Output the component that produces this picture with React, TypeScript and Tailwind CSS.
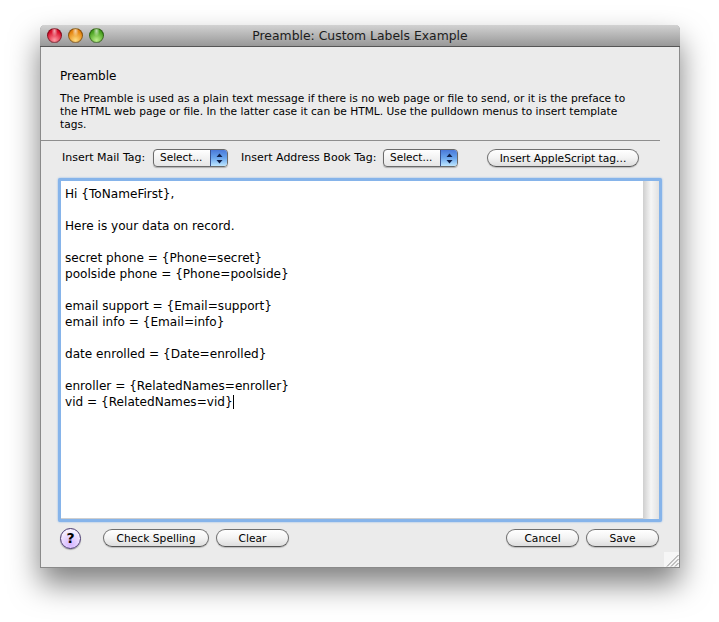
const font = { fontFamily: '"DejaVu Sans", sans-serif' };

function Light({ c }: { c: string }) {
  return <span className={`w-[15px] h-[15px] rounded-full border border-black/40 ${c}`} />;
}

function Capsule({ label, w }: { label: string; w: string }) {
  return (
    <button className={`${w} h-[18px] rounded-full border border-[#6f6f6f] border-b-[#555] bg-gradient-to-b from-white via-[#f3f3f3] to-[#dedede] text-[10.7px] leading-[15px] text-black shadow-[0_1px_1px_rgba(0,0,0,0.2)]`}>
      {label}
    </button>
  );
}

function Select({ mr }: { mr?: string }) {
  return (
    <div className={`flex h-[18px] w-[75px] rounded-[4px] border border-[#6a6a6a] overflow-hidden bg-gradient-to-b from-white to-[#e6e6e6] shadow-[0_1px_1px_rgba(0,0,0,0.25)] ${mr ?? ''}`}>
      <span className="flex-1 pl-[6px] text-[10.5px] leading-[15px] text-black">Select...</span>
      <span className="w-[17px] flex items-center justify-center bg-gradient-to-b from-[#4a78d8] via-[#6aa6ee] to-[#bfe6fd] border-l border-[#39528f]">
        <svg width="7" height="11" viewBox="0 0 7 11">
          <path d="M3.5 0.5 L6.5 4 H0.5 Z M3.5 10.5 L6.5 7 H0.5 Z" fill="#10204a" />
        </svg>
      </span>
    </div>
  );
}

const lines = [
  'Hi {ToNameFirst},',
  '',
  'Here is your data on record.',
  '',
  'secret phone = {Phone=secret}',
  'poolside phone = {Phone=poolside}',
  '',
  'email support = {Email=support}',
  'email info = {Email=info}',
  '',
  'date enrolled = {Date=enrolled}',
  '',
  'enroller = {RelatedNames=enroller}',
];

export default function App() {
  return (
    <div className="w-[719px] h-[622px] bg-white pt-[25px] pl-[40px] overflow-hidden" style={font}>
      <div className="relative w-[640px] h-[543px] rounded-t-[5px] bg-[#ebebeb] border-x border-b border-[#8a8a8a] shadow-[0_16px_30px_rgba(0,0,0,0.5)] flex flex-col">
        <div className="relative h-[22px] shrink-0 -mx-px rounded-t-[5px] bg-gradient-to-b from-[#d2d2d2] to-[#989898] border-b border-[#555] flex items-center pl-[7px] gap-[6px]">
          <Light c="bg-[radial-gradient(ellipse_at_50%_15%,rgba(255,255,255,0.65),transparent_35%),radial-gradient(circle_at_50%_85%,#ff9aa4,#d80c28_70%)]" />
          <Light c="bg-[radial-gradient(ellipse_at_50%_15%,rgba(255,255,255,0.65),transparent_35%),radial-gradient(circle_at_50%_85%,#ffdc80,#e4820c_70%)]" />
          <Light c="bg-[radial-gradient(ellipse_at_50%_15%,rgba(255,255,255,0.65),transparent_35%),radial-gradient(circle_at_50%_85%,#bcf08a,#47a01e_70%)]" />
          <span className="absolute inset-0 text-center text-[12.4px] leading-[22px] text-[#1c1c1c]">Preamble: Custom Labels Example</span>
        </div>

        <h1 className="mt-[21px] ml-[19px] text-[12px] leading-[16px] font-normal text-black">Preamble</h1>
        <p className="mt-[8px] ml-[19px] w-[572px] text-[10.65px] leading-[13px] text-black">
          The Preamble is used as a plain text message if there is no web page or file to send, or it is the preface to the HTML web page or file. In the latter case it can be HTML. Use the pulldown menus to insert template tags.
        </p>

        <div className="mt-[9px] w-[619px] h-px bg-[#8e8e8e]" />

        <div className="mt-[8px] flex items-center h-[18px] pl-[21px] text-[11px] text-black">
          <span className="w-[91px]">Insert Mail Tag:</span>
          <Select mr="mr-[13px]" />
          <span className="w-[142px]">Insert Address Book Tag:</span>
          <Select mr="mr-[29px]" />
          <Capsule label="Insert AppleScript tag..." w="w-[152px]" />
        </div>

        <div className="mt-[11px] ml-[17px] w-[604px] h-[344px] rounded-[2px] border-[3px] border-[#86b4ea] flex bg-white shadow-[0_0_2px_#7fb0e8,inset_0_-1px_0_#cfcfcf]">
          <div className="flex-1 pl-[4px] pt-[5px] text-[12.1px] leading-[16px] text-black">
            {lines.map((l, i) => (
              <div key={i} className="h-[16px] whitespace-pre">{l}</div>
            ))}
            <div className="h-[16px] flex items-center">
              vid = {'{'}RelatedNames=vid{'}'}
              <span className="inline-block w-px h-[14px] bg-black" />
            </div>
          </div>
          <div className="w-[16px] bg-gradient-to-r from-[#cfcfcf] via-[#f6f6f6] to-[#e2e2e2]" />
        </div>

        <div className="mt-[6px] ml-[19px] flex items-center h-[20px]">
          <span className="w-[21px] h-[21px] rounded-full border border-[#4a3a70] bg-[radial-gradient(circle_at_50%_80%,#d4b4ff,#f7f0ff_75%)] flex items-center justify-center text-[14px] leading-none font-bold text-black shadow-[0_1px_1px_rgba(0,0,0,0.3)] mr-[22px]">?</span>
          <Capsule label="Check Spelling" w="w-[106px] mr-[7px]" />
          <Capsule label="Clear" w="w-[73px]" />
          <span className="flex-1" />
          <Capsule label="Cancel" w="w-[73px] mr-[7px]" />
          <Capsule label="Save" w="w-[73px] mr-[20px]" />
        </div>

        <div className="absolute right-0 bottom-0 w-[15px] h-[15px] bg-[#f6f6f6]">
          <svg width="15" height="15" viewBox="0 0 15 15">
            <path d="M3 14.5 L14.5 3 M7 14.5 L14.5 7 M11 14.5 L14.5 11" stroke="#8a8a8a" strokeWidth="1" fill="none" />
          </svg>
        </div>
      </div>
    </div>
  );
}
